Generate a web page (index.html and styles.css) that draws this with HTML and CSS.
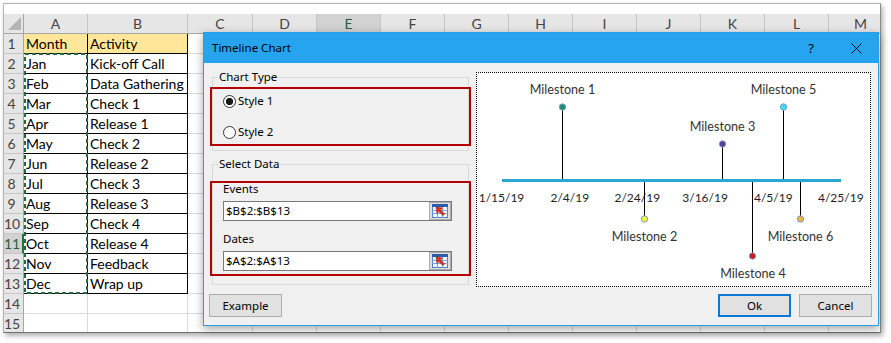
FILE: index.html
```html
<!DOCTYPE html>
<html>
<head>
<meta charset="utf-8">
<link rel="stylesheet" href="styles.css">
</head>
<body>
<div class="sheet">
  <div class="strip"></div>
  <div class="grid">
    <div class="corner"><svg width="19" height="19" viewBox="0 0 19 19"><polygon points="4,16 17,16 17,3" fill="#b4b4b4"/></svg></div>
    <div class="ch">A</div><div class="ch">B</div><div class="ch">C</div><div class="ch">D</div><div class="ch sel">E</div><div class="ch">F</div><div class="ch">G</div><div class="ch">H</div><div class="ch">I</div><div class="ch">J</div><div class="ch">K</div><div class="ch">L</div><div class="ch">M</div>

    <div class="rh">1</div><div class="c t y">Month</div><div class="c t y">Activity</div><div class="c"></div><div class="c"></div><div class="c"></div><div class="c"></div><div class="c"></div><div class="c"></div><div class="c"></div><div class="c"></div><div class="c"></div><div class="c"></div><div class="c"></div>
    <div class="rh">2</div><div class="c t">Jan</div><div class="c t">Kick-off Call</div><div class="c"></div><div class="c"></div><div class="c"></div><div class="c"></div><div class="c"></div><div class="c"></div><div class="c"></div><div class="c"></div><div class="c"></div><div class="c"></div><div class="c"></div>
    <div class="rh">3</div><div class="c t">Feb</div><div class="c t">Data Gathering</div><div class="c"></div><div class="c"></div><div class="c"></div><div class="c"></div><div class="c"></div><div class="c"></div><div class="c"></div><div class="c"></div><div class="c"></div><div class="c"></div><div class="c"></div>
    <div class="rh">4</div><div class="c t">Mar</div><div class="c t">Check 1</div><div class="c"></div><div class="c"></div><div class="c"></div><div class="c"></div><div class="c"></div><div class="c"></div><div class="c"></div><div class="c"></div><div class="c"></div><div class="c"></div><div class="c"></div>
    <div class="rh">5</div><div class="c t">Apr</div><div class="c t">Release 1</div><div class="c"></div><div class="c"></div><div class="c"></div><div class="c"></div><div class="c"></div><div class="c"></div><div class="c"></div><div class="c"></div><div class="c"></div><div class="c"></div><div class="c"></div>
    <div class="rh">6</div><div class="c t">May</div><div class="c t">Check 2</div><div class="c"></div><div class="c"></div><div class="c"></div><div class="c"></div><div class="c"></div><div class="c"></div><div class="c"></div><div class="c"></div><div class="c"></div><div class="c"></div><div class="c"></div>
    <div class="rh">7</div><div class="c t">Jun</div><div class="c t">Release 2</div><div class="c"></div><div class="c"></div><div class="c"></div><div class="c"></div><div class="c"></div><div class="c"></div><div class="c"></div><div class="c"></div><div class="c"></div><div class="c"></div><div class="c"></div>
    <div class="rh">8</div><div class="c t">Jul</div><div class="c t">Check 3</div><div class="c"></div><div class="c"></div><div class="c"></div><div class="c"></div><div class="c"></div><div class="c"></div><div class="c"></div><div class="c"></div><div class="c"></div><div class="c"></div><div class="c"></div>
    <div class="rh">9</div><div class="c t">Aug</div><div class="c t">Release 3</div><div class="c"></div><div class="c"></div><div class="c"></div><div class="c"></div><div class="c"></div><div class="c"></div><div class="c"></div><div class="c"></div><div class="c"></div><div class="c"></div><div class="c"></div>
    <div class="rh">10</div><div class="c t">Sep</div><div class="c t">Check 4</div><div class="c"></div><div class="c"></div><div class="c"></div><div class="c"></div><div class="c"></div><div class="c"></div><div class="c"></div><div class="c"></div><div class="c"></div><div class="c"></div><div class="c"></div>
    <div class="rh sel">11</div><div class="c t">Oct</div><div class="c t">Release 4</div><div class="c"></div><div class="c"></div><div class="c"></div><div class="c"></div><div class="c"></div><div class="c"></div><div class="c"></div><div class="c"></div><div class="c"></div><div class="c"></div><div class="c"></div>
    <div class="rh">12</div><div class="c t">Nov</div><div class="c t">Feedback</div><div class="c"></div><div class="c"></div><div class="c"></div><div class="c"></div><div class="c"></div><div class="c"></div><div class="c"></div><div class="c"></div><div class="c"></div><div class="c"></div><div class="c"></div>
    <div class="rh">13</div><div class="c t">Dec</div><div class="c t">Wrap up</div><div class="c"></div><div class="c"></div><div class="c"></div><div class="c"></div><div class="c"></div><div class="c"></div><div class="c"></div><div class="c"></div><div class="c"></div><div class="c"></div><div class="c"></div>
    <div class="rh">14</div><div class="c"></div><div class="c"></div><div class="c"></div><div class="c"></div><div class="c"></div><div class="c"></div><div class="c"></div><div class="c"></div><div class="c"></div><div class="c"></div><div class="c"></div><div class="c"></div><div class="c"></div>
    <div class="rh">15</div><div class="c"></div><div class="c"></div><div class="c"></div><div class="c"></div><div class="c"></div><div class="c"></div><div class="c"></div><div class="c"></div><div class="c"></div><div class="c"></div><div class="c"></div><div class="c"></div><div class="c"></div>

    <div class="marquee"><svg width="64" height="241" viewBox="0 0 64 241"><rect x="1" y="1" width="62" height="239" fill="none" stroke="#1d6b3e" stroke-width="2" stroke-dasharray="4 3"/></svg></div>
  </div>
</div>

<div class="dialog">
  <div class="titlebar">
    <span class="title">Timeline Chart</span>
    <span class="help">?</span>
    <svg class="close" width="11" height="11" viewBox="0 0 11 11"><path d="M0.5 0.5 L10.5 10.5 M10.5 0.5 L0.5 10.5" stroke="#000" stroke-width="1" fill="none"/></svg>
  </div>
  <div class="dbody">
    <div class="main">
      <div class="left">
        <div class="group g1">
          <div class="legend">Chart Type</div>
          <div class="hl radios">
            <div class="radio-row"><span class="radio on"></span><span>Style 1</span></div>
            <div class="radio-row"><span class="radio"></span><span>Style 2</span></div>
          </div>
        </div>
        <div class="group g2">
          <div class="legend">Select Data</div>
          <div class="hl fields">
            <div class="flabel">Events</div>
            <div class="input"><span class="val">$B$2:$B$13</span><span class="rbtn"><svg width="16" height="14" viewBox="0 0 16 14"><rect x="0.5" y="0.5" width="15" height="13" fill="#f4f8ff" stroke="#4d7fcf"/><rect x="0" y="0" width="16" height="3" fill="#2c5cb0"/><path d="M0 6.5 H16 M0 9.5 H16 M5.5 3 V14 M10.5 3 V14" stroke="#7aa3e3" stroke-width="1"/><polygon points="4,3 10.5,4 8.6,5.9 12.6,9.9 10.9,11.6 6.9,7.6 5,9.5" fill="#e0301e" stroke="#9a1a10" stroke-width="0.6"/></svg></span></div>
            <div class="flabel second">Dates</div>
            <div class="input"><span class="val">$A$2:$A$13</span><span class="rbtn"><svg width="16" height="14" viewBox="0 0 16 14"><rect x="0.5" y="0.5" width="15" height="13" fill="#f4f8ff" stroke="#4d7fcf"/><rect x="0" y="0" width="16" height="3" fill="#2c5cb0"/><path d="M0 6.5 H16 M0 9.5 H16 M5.5 3 V14 M10.5 3 V14" stroke="#7aa3e3" stroke-width="1"/><polygon points="4,3 10.5,4 8.6,5.9 12.6,9.9 10.9,11.6 6.9,7.6 5,9.5" fill="#e0301e" stroke="#9a1a10" stroke-width="0.6"/></svg></span></div>
          </div>
        </div>
      </div>
      <div class="chart">
        <svg width="393" height="213" viewBox="0 0 393 213">
          <rect x="25" y="106" width="339" height="3" fill="#2ba5d3"/>
          <g class="dt">
            <text x="24.5" y="129">1/15/19</text>
            <text x="92.8" y="129">2/4/19</text>
            <text x="160.3" y="129">2/24/19</text>
            <text x="228.1" y="129">3/16/19</text>
            <text x="296.3" y="129">4/5/19</text>
            <text x="363.8" y="129">4/25/19</text>
          </g>
          <g stroke="#000" stroke-width="1">
            <line x1="85.5" y1="34" x2="85.5" y2="106"/>
            <line x1="245.5" y1="71" x2="245.5" y2="106"/>
            <line x1="306.5" y1="34" x2="306.5" y2="106"/>
            <line x1="167.5" y1="109" x2="167.5" y2="146"/>
            <line x1="275.5" y1="109" x2="275.5" y2="183"/>
            <line x1="323.5" y1="109" x2="323.5" y2="146"/>
          </g>
          <g stroke="#7d9fc6" stroke-width="1">
            <circle cx="85.5" cy="34" r="3.2" fill="#1f8f78"/>
            <circle cx="245.5" cy="71" r="3.2" fill="#5a3c9c"/>
            <circle cx="306.5" cy="34" r="3.2" fill="#3fdcf4"/>
            <circle cx="167.5" cy="146" r="3.2" fill="#f2f24a"/>
            <circle cx="275.5" cy="183" r="3.2" fill="#c71c1c"/>
            <circle cx="323.5" cy="146" r="3.2" fill="#f0b04c"/>
          </g>
          <g class="ms">
            <text x="85.5" y="21">Milestone 1</text>
            <text x="245.5" y="58">Milestone 3</text>
            <text x="306.5" y="21">Milestone 5</text>
            <text x="167.5" y="168">Milestone 2</text>
            <text x="276" y="205">Milestone 4</text>
            <text x="323.5" y="168">Milestone 6</text>
          </g>
        </svg>
      </div>
    </div>
    <div class="footer">
      <button class="btn">Example</button>
      <span class="spacer"></span>
      <button class="btn ok">Ok</button>
      <button class="btn cancel">Cancel</button>
    </div>
  </div>
</div>
</body>
</html>
```
FILE: styles.css
```css
html, body {
  margin: 0;
  padding: 0;
}
body {
  width: 891px;
  height: 343px;
  overflow: hidden;
  background: #ffffff;
  font-family: Lato, "Liberation Sans", sans-serif;
  position: relative;
}

/* ---------- spreadsheet ---------- */
.sheet {
  box-sizing: border-box;
  margin: 3px 0 0 3px;
  width: 878px;
  height: 330px;
  border: 1px solid #b4b4b4;
  border-right-color: #8a8a8a;
  border-bottom-color: #6e6e6e;
  overflow: hidden;
  background: #fff;
  box-shadow: 2px 3px 5px rgba(0, 0, 0, 0.3);
}
.strip {
  height: 10px;
}
.grid {
  position: relative;
  display: grid;
  grid-template-columns: 20px 64px 100px 65px repeat(10, 64px);
  grid-template-rows: repeat(16, 20px);
}
.grid > div {
  box-sizing: border-box;
  border-right: 1px solid #dadada;
  border-bottom: 1px solid #dadada;
}
.corner {
  background: #e6e6e6;
  border-right-color: #a6a6a6 !important;
  border-bottom-color: #a6a6a6 !important;
}
.corner svg {
  display: block;
}
.ch {
  background: #e6e6e6;
  border-right-color: #c6c6c6 !important;
  border-bottom-color: #a6a6a6 !important;
  text-align: center;
  font-size: 14px;
  line-height: 19px;
  color: #444;
}
.ch.sel {
  background: #d2d2d2;
  color: #1f5e3c;
}
.rh {
  background: #e6e6e6;
  border-right-color: #a6a6a6 !important;
  border-bottom-color: #c6c6c6 !important;
  text-align: center;
  padding-right: 4px;
  font-size: 14px;
  line-height: 19px;
  color: #444;
}
.rh.sel {
  background: #d2d2d2;
  border-right: 2px solid #217346 !important;
  color: #2b5e40;
}
.c {
  font-size: 14px;
  line-height: 19px;
  padding-left: 2px;
  white-space: nowrap;
  overflow: hidden;
  color: #000;
}
.t {
  border-right-color: #000 !important;
  border-bottom-color: #000 !important;
}
.y {
  background: #ffe699;
}
.grid > .marquee {
  position: absolute;
  grid-column: 2;
  grid-row: 3 / 15;
  top: -1px;
  left: 0;
  right: 0;
  bottom: 0;
  border: none;
}
.marquee svg {
  display: block;
}

/* ---------- dialog ---------- */
.dialog {
  position: absolute;
  left: 203px;
  top: 32px;
  width: 676px;
  height: 294px;
  box-sizing: border-box;
  border: 1px solid #2a9de9;
  background: #f0f0f0;
  box-shadow: 0 3px 9px rgba(0, 0, 0, 0.35);
  font-family: "Noto Sans", "Open Sans", sans-serif;
  font-size: 11.5px;
  color: #000;
  display: flex;
  flex-direction: column;
}
.titlebar {
  height: 30px;
  background: #27a4f0;
  display: flex;
  align-items: center;
  padding-left: 8px;
}
.title {
  flex: 1;
  font-size: 11.5px;
  line-height: 16px;
}
.help {
  font-size: 13px;
  line-height: 16px;
  margin-right: 37px;
}
.close {
  display: block;
  margin-right: 16px;
}
.dbody {
  flex: 1;
  display: flex;
  flex-direction: column;
}
.main {
  display: flex;
  align-items: flex-start;
}
.left {
  margin-left: 8px;
  margin-top: 14px;
  width: 257px;
}
.group {
  border: 1px solid #d9d9d9;
  box-sizing: border-box;
}
.g1 {
  padding-bottom: 4px;
}
.g2 {
  margin-top: 13px;
  padding-bottom: 8px;
}
.legend {
  width: fit-content;
  margin-top: -9px;
  margin-left: 5px;
  padding: 0 1px;
  line-height: 16px;
  background: #f0f0f0;
}
.hl {
  border: 2px solid #b40000;
  margin: 2px -3px 0;
}
.radios {
  padding-left: 11px;
  display: flex;
  flex-direction: column;
  gap: 7px;
}
.radio-row {
  height: 24px;
  display: flex;
  align-items: center;
  gap: 2px;
  line-height: 16px;
}
.radio {
  box-sizing: border-box;
  width: 13px;
  height: 13px;
  border: 1px solid #333;
  border-radius: 50%;
  background: #fff;
}
.radio.on {
  background: radial-gradient(circle, #1a1a1a 0 3.4px, #ffffff 3.9px);
}
.fields {
  margin-top: 9px;
  padding: 0 0 3px 11px;
}
.flabel {
  line-height: 12px;
}
.flabel.second {
  margin-top: 12px;
}
.input {
  margin-top: 6px;
  width: 229px;
  height: 20px;
  box-sizing: border-box;
  border: 1px solid #7a7a7a;
  background: #fff;
  display: flex;
  align-items: center;
  justify-content: space-between;
}
.val {
  padding-left: 2px;
  line-height: 16px;
}
.rbtn {
  box-sizing: border-box;
  width: 22px;
  height: 18px;
  border: 1px solid #acacac;
  background: #dedede;
  display: flex;
  align-items: center;
  justify-content: center;
}
.rbtn svg {
  display: block;
}
.chart {
  margin-left: 7px;
  margin-top: 9px;
  width: 395px;
  height: 215px;
  box-sizing: border-box;
  border: 1px dotted #000;
  background: #fff;
}
.chart svg {
  display: block;
}
.dt text {
  font-family: Lato, "Liberation Sans", sans-serif;
  font-size: 12px;
  fill: #1e1e1e;
  text-anchor: middle;
}
.ms text {
  font-family: Lato, "Liberation Sans", sans-serif;
  font-size: 12.6px;
  fill: #333;
  text-anchor: middle;
}
.footer {
  display: flex;
  margin-top: 7px;
  padding-left: 5px;
  padding-right: 6px;
  gap: 8px;
}
.spacer {
  flex: 1;
}
.btn {
  box-sizing: border-box;
  width: 73px;
  height: 23px;
  margin: 0;
  padding: 0;
  border: 1px solid #adadad;
  background: #e1e1e1;
  font-family: "Noto Sans", "Open Sans", sans-serif;
  font-size: 11.5px;
  color: #000;
  line-height: 16px;
}
.btn.ok {
  border: 2px solid #0a78d7;
}
```
